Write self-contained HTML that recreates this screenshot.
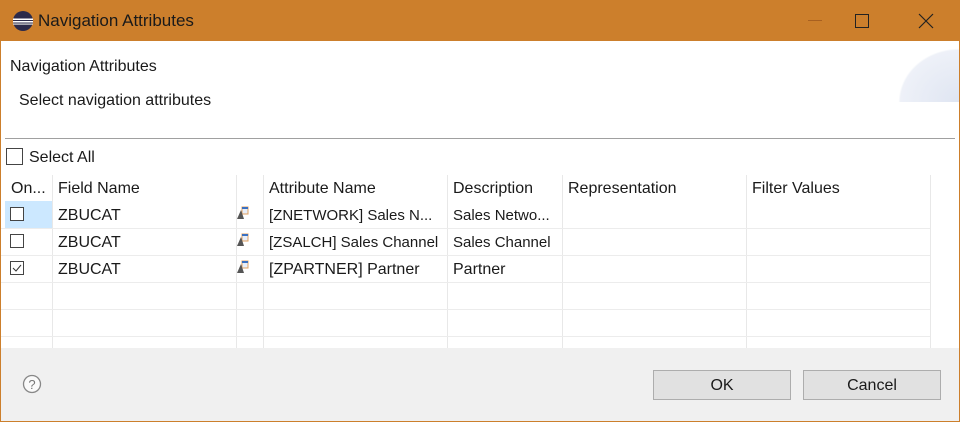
<!DOCTYPE html><html><head><style>
body{margin:0;width:960px;height:422px;overflow:hidden;font-family:"Liberation Sans",sans-serif;font-size:16px;color:#1a1a1a;position:relative;background:#fff}
.a{position:absolute}
.cb{position:absolute;width:12px;height:12px;border:1px solid #444;background:#fff}
.vl{position:absolute;top:175px;height:173px;width:1px;background:#e8e8e8}
.hl{position:absolute;left:1px;width:929px;height:1px;background:#ececec}
.t{position:absolute;white-space:nowrap}
.btn{position:absolute;top:370px;width:136px;height:28px;border:1px solid #adadad;background:#e1e1e1;text-align:center;line-height:29px}
</style></head><body>
<div class="a" style="left:0;top:0;width:960px;height:41px;background:#cc7f2c"></div>
<div class="a" style="left:0;top:41px;width:1px;height:381px;background:#cc7f2c"></div>
<div class="a" style="right:0;top:41px;width:1px;height:381px;background:#cc7f2c"></div>
<div class="a" style="left:0;bottom:0;width:960px;height:1px;background:#cc7f2c"></div>
<svg class="a" style="left:12px;top:10px" width="22" height="22"><circle cx="11" cy="11" r="10" fill="#2c2a4a"/><rect x="1" y="8.5" width="20" height="1.5" fill="#fff"/><rect x="1" y="11" width="20" height="1.5" fill="#fff"/><rect x="1" y="13.5" width="20" height="1.2" fill="#ddd"/></svg>
<div class="t" style="left:38px;top:11px;font-size:17px">Navigation Attributes</div>
<div class="a" style="left:808px;top:20px;width:14px;height:1px;background:#a86020"></div>
<div class="a" style="left:855px;top:14px;width:12px;height:12px;border:1px solid #222"></div>
<svg class="a" style="left:918px;top:13px" width="16" height="16"><path d="M1 1L15 15M15 1L1 15" stroke="#222" stroke-width="1.2"/></svg>
<div class="a" style="left:890px;top:41px;width:69px;height:61px;background:radial-gradient(ellipse at 100% 100%,#dfe5f2 0%,#eef1f8 60%,#fff 62%)"></div>
<div class="t" style="left:10px;top:58px">Navigation Attributes</div>
<div class="t" style="left:19px;top:92px">Select navigation attributes</div>
<div class="a" style="left:5px;top:138px;width:950px;height:1px;background:#a0a0a0"></div>
<div class="cb" style="left:6px;top:148px;width:15px;height:15px"></div>
<div class="t" style="left:29px;top:149px">Select All</div>
<div class="vl" style="left:52px"></div><div class="vl" style="left:236px"></div><div class="vl" style="left:263px"></div><div class="vl" style="left:447px"></div><div class="vl" style="left:562px"></div><div class="vl" style="left:746px"></div><div class="vl" style="left:930px"></div>
<div class="hl" style="top:228px"></div><div class="hl" style="top:255px"></div><div class="hl" style="top:282px"></div><div class="hl" style="top:309px"></div><div class="hl" style="top:336px"></div>
<div class="t" style="left:11px;top:180px">On...</div><div class="t" style="left:58px;top:180px">Field Name</div><div class="t" style="left:269px;top:180px">Attribute Name</div><div class="t" style="left:453px;top:180px">Description</div><div class="t" style="left:568px;top:180px">Representation</div><div class="t" style="left:752px;top:180px">Filter Values</div>
<div class="a" style="left:5px;top:201px;width:47px;height:27px;background:#cce8ff"></div>
<div class="cb" style="left:10px;top:207px"></div><div class="cb" style="left:10px;top:234px"></div><div class="cb" style="left:10px;top:261px"></div>
<svg class="a" style="left:11px;top:263px" width="12" height="10"><path d="M2 5L5 8L10 2" stroke="#333" fill="none"/></svg>
<div class="t" style="left:58px;top:207px">ZBUCAT</div><div class="t" style="left:58px;top:234px">ZBUCAT</div><div class="t" style="left:58px;top:261px">ZBUCAT</div>
<svg class="a" style="left:236px;top:206px" width="14" height="14"><rect x="6" y="1" width="6" height="7" fill="#e8eef8" stroke="#e0a060"/><rect x="6" y="1" width="6" height="2" fill="#3a70c0"/><path d="M1 13L5 4L8 13Z" fill="#555"/></svg>
<svg class="a" style="left:236px;top:233px" width="14" height="14"><rect x="6" y="1" width="6" height="7" fill="#e8eef8" stroke="#e0a060"/><rect x="6" y="1" width="6" height="2" fill="#3a70c0"/><path d="M1 13L5 4L8 13Z" fill="#555"/></svg>
<svg class="a" style="left:236px;top:260px" width="14" height="14"><rect x="6" y="1" width="6" height="7" fill="#e8eef8" stroke="#e0a060"/><rect x="6" y="1" width="6" height="2" fill="#3a70c0"/><path d="M1 13L5 4L8 13Z" fill="#555"/></svg>
<div class="t" style="left:269px;top:207px;font-size:15px">[ZNETWORK] Sales N...</div><div class="t" style="left:269px;top:234px;font-size:15px">[ZSALCH] Sales Channel</div><div class="t" style="left:269px;top:261px">[ZPARTNER] Partner</div>
<div class="t" style="left:453px;top:207px;font-size:15px">Sales Netwo...</div><div class="t" style="left:453px;top:234px;font-size:15px">Sales Channel</div><div class="t" style="left:453px;top:261px">Partner</div>
<div class="a" style="left:1px;top:348px;width:958px;height:73px;background:#f0f0f0"></div>
<svg class="a" style="left:22px;top:374px" width="20" height="20"><circle cx="10" cy="10" r="8.5" fill="#fafafa" stroke="#888" stroke-width="1.3"/><text x="10" y="15" font-size="13" text-anchor="middle" fill="#777" font-family="Liberation Sans">?</text></svg>
<div class="btn" style="left:653px">OK</div><div class="btn" style="left:803px">Cancel</div>
</body></html>
